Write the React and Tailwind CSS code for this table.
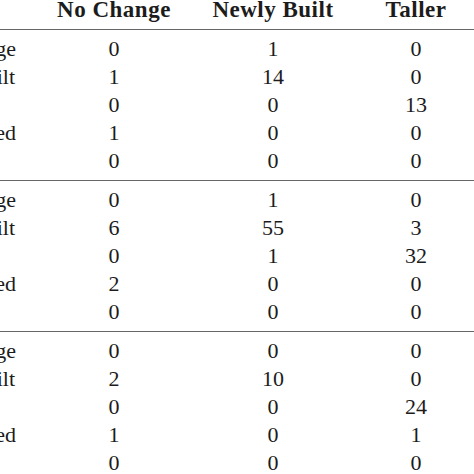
import React from 'react'

// end = how far past the left edge each row label reaches (labels are clipped)
const labels = [
  ['No Change', 16],
  ['Newly Built', 15],
  ['Taller', -8],
  ['Demolished', 16],
  ['Lower', -8],
]

const sections = [
  [[0, 1, 0], [1, 14, 0], [0, 0, 13], [1, 0, 0], [0, 0, 0]],
  [[0, 1, 0], [6, 55, 3], [0, 1, 32], [2, 0, 0], [0, 0, 0]],
  [[0, 0, 0], [2, 10, 0], [0, 0, 24], [1, 0, 1], [0, 0, 0]],
]

const cols = 'grid grid-cols-[40px_148px_170px_116px]'

export default function App() {
  return (
    <div className="w-[474px] h-[474px] overflow-hidden bg-white text-[#1c1c1c] font-['Liberation_Serif',serif]">
      {/* header */}
      <div className={`${cols} h-[29px] text-[23px] font-bold tracking-[0.5px] leading-[20px]`}>
        <div />
        <div className="text-center whitespace-nowrap">No Change</div>
        <div className="text-center whitespace-nowrap">Newly Built</div>
        <div className="text-center whitespace-nowrap">Taller</div>
      </div>

      {sections.map((rows, si) => (
        <div key={si} className="border-t border-[#666] py-[5px]">
          {rows.map(([a, b, c], ri) => (
            <div key={ri} className={`${cols} h-[28px] items-center text-[22px] leading-[28px]`}>
              <div className="relative h-[28px] overflow-hidden">
                <span className="absolute top-0 whitespace-nowrap" style={{ right: 40 - labels[ri][1] }}>
                  {labels[ri][0]}
                </span>
              </div>
              <div className="text-center">{a}</div>
              <div className="text-center">{b}</div>
              <div className="text-center">{c}</div>
            </div>
          ))}
        </div>
      ))}
    </div>
  )
}
